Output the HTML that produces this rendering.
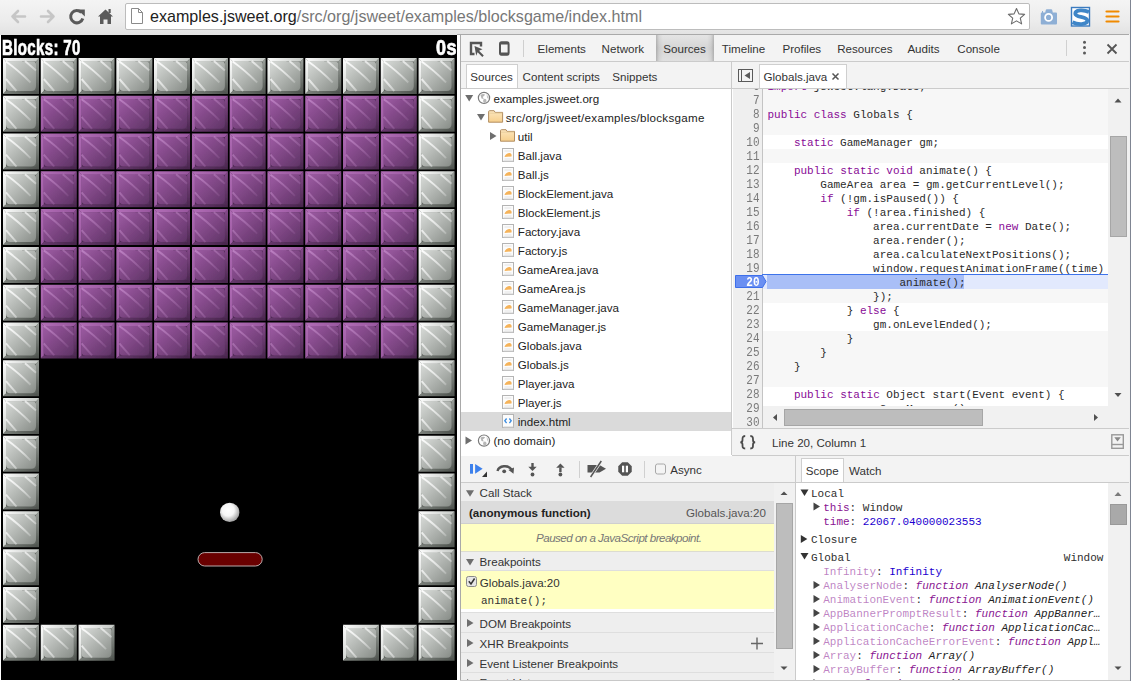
<!DOCTYPE html>
<html><head><meta charset="utf-8">
<style>
*{margin:0;padding:0;box-sizing:border-box}
html,body{width:1131px;height:681px;overflow:hidden;background:#e8e8e8;font-family:"Liberation Sans",sans-serif;position:relative}
.a{position:absolute}
.t{position:absolute;white-space:nowrap;line-height:1}
.mono{font-family:"Liberation Mono",monospace}
</style></head><body>
<div class="a" style="left:0px;top:0px;width:1131px;height:35px;background:linear-gradient(#f4f4f4,#ececec 60%,#e2e2e2);"></div>
<div class="a" style="left:125px;top:3px;width:905px;height:27px;background:#fff;border:1px solid #bcbcbc;border-radius:2px"></div>
<div class="t" style="left:150px;top:8.37px;font-size:16.1px;color:#222;">examples.jsweet.org<span style="color:#777">/src/org/jsweet/examples/blocksgame/index.html</span></div>
<svg class="a" style="left:0;top:0" width="125" height="34">
<g stroke="#c6c6c6" stroke-width="2.6" fill="none" stroke-linecap="round" stroke-linejoin="round">
<path d="M12.5,16.5 H25 M18,11 L12.5,16.5 L18,22"/>
<path d="M41,16.5 H53.5 M48,11 L53.5,16.5 L48,22"/>
</g>
<path d="M81.5,12.5 A6.2,6.2 0 1 0 82.8,18.5" stroke="#5a5a5a" stroke-width="3" fill="none"/>
<path d="M77.5,9.5 L84.8,9.5 L84.8,16.5 Z" fill="#5a5a5a"/>
<path d="M105.5,9.5 L113,16.5 L111,16.5 L111,24 L107.5,24 L107.5,19.5 L103.5,19.5 L103.5,24 L100,24 L100,16.5 L98,16.5 Z" fill="#5a5a5a"/>
<rect x="108.5" y="9" width="2.2" height="4" fill="#5a5a5a"/>
</svg>
<svg class="a" style="left:128px;top:6px" width="20" height="20">
<path d="M3.5,2.5 H10.5 L14.5,6.5 V17.5 H3.5 Z" fill="#fff" stroke="#8a8a8a" stroke-width="1"/>
<path d="M10.5,2.5 V6.5 H14.5" fill="none" stroke="#8a8a8a" stroke-width="1"/>
</svg>
<svg class="a" style="left:1000px;top:0" width="131" height="34">
<path d="M16.5,8.5 L18.9,13.9 L24.6,14.4 L20.3,18.2 L21.6,23.9 L16.5,20.9 L11.4,23.9 L12.7,18.2 L8.4,14.4 L14.1,13.9 Z" fill="none" stroke="#6a6a6a" stroke-width="1.1" stroke-linejoin="round"/>
<path d="M40.8,13.5 Q40.8,12.5 41.8,12.5 H45.2 L45.8,10 Q46,9.2 46.8,9.2 H51.2 Q52,9.2 52.2,10 L52.8,12.5 H56 Q57,12.5 57,13.5 V23.5 Q57,24.5 56,24.5 H41.8 Q40.8,24.5 40.8,23.5 Z" fill="#8eafd5"/>
<rect x="42" y="11" width="1" height="2" fill="#8eafd5"/>
<circle cx="48.6" cy="17.4" r="3.5" fill="none" stroke="#fff" stroke-width="1.8"/>
<rect x="71.5" y="7.5" width="18" height="18.5" fill="#fff" stroke="#3b7bbf" stroke-width="1.4"/>
<path d="M89,12 C84,9.5 75,9.5 75.3,13.8 C75.6,17.8 87.3,15.8 87.3,20.6 C87.3,25 77.5,24.8 72.5,22.2" fill="none" stroke="#3f86c8" stroke-width="3.8"/>
<g stroke="#f08a00" stroke-width="2.2" stroke-linecap="round"><path d="M106.5,11.5 H118.5 M106.5,16.5 H118.5 M106.5,21.5 H118.5"/></g>

</svg>
<div class="a" style="left:0px;top:35px;width:460px;height:646px;background:#fff;"></div>
<div class="a" style="left:1px;top:35px;width:456px;height:645px;background:#000;"></div>
<svg class="a" style="left:1px;top:35px" width="456" height="645" viewBox="0 0 456 645">
<defs>
<filter id="bl" x="-10%" y="-10%" width="120%" height="120%"><feGaussianBlur stdDeviation=".7"/></filter>
<linearGradient id="gi" x1="0" y1="0" x2="1" y2="1"><stop offset="0" stop-color="#d8dbd8"/><stop offset="0.5" stop-color="#b0b4b0"/><stop offset="1" stop-color="#878c87"/></linearGradient>
<linearGradient id="gt" x1="0" y1="0" x2="1" y2="0"><stop offset="0" stop-color="#ffffff"/><stop offset="1" stop-color="#c2c6c2"/></linearGradient>
<linearGradient id="gl" x1="0" y1="0" x2="0" y2="1"><stop offset="0" stop-color="#ffffff"/><stop offset="1" stop-color="#d0d4d0"/></linearGradient>
<linearGradient id="gb" x1="0" y1="0" x2="1" y2="0"><stop offset="0" stop-color="#7f847f"/><stop offset="1" stop-color="#4a4f4a"/></linearGradient>
<linearGradient id="gr" x1="0" y1="0" x2="0" y2="1"><stop offset="0" stop-color="#a0a5a0"/><stop offset="1" stop-color="#4a4f4a"/></linearGradient>
<linearGradient id="pi" x1="0" y1="0" x2="1" y2="1"><stop offset="0" stop-color="#9d5ba3"/><stop offset="0.5" stop-color="#7e4684"/><stop offset="1" stop-color="#5f3466"/></linearGradient>
<linearGradient id="pt" x1="0" y1="0" x2="1" y2="0"><stop offset="0" stop-color="#b36fb8"/><stop offset="1" stop-color="#96559c"/></linearGradient>
<linearGradient id="pl" x1="0" y1="0" x2="0" y2="1"><stop offset="0" stop-color="#b06cb5"/><stop offset="1" stop-color="#9a59a0"/></linearGradient>
<linearGradient id="pb" x1="0" y1="0" x2="1" y2="0"><stop offset="0" stop-color="#6a3a70"/><stop offset="1" stop-color="#452449"/></linearGradient>
<linearGradient id="pr" x1="0" y1="0" x2="0" y2="1"><stop offset="0" stop-color="#8a4c90"/><stop offset="1" stop-color="#452449"/></linearGradient>
<clipPath id="bc"><rect width="36" height="36"/></clipPath>
<filter id="b2" x="-5%" y="-5%" width="110%" height="110%"><feGaussianBlur stdDeviation=".6"/></filter>
<filter id="b3" x="-20%" y="-20%" width="140%" height="140%"><feGaussianBlur stdDeviation=".65"/></filter>
<symbol id="bg" viewBox="0 0 36 36" width="36" height="36">
<linearGradient id="bgS" gradientUnits="userSpaceOnUse" x1="2" y1="2" x2="30" y2="28"><stop offset="0" stop-color="#ffffff" stop-opacity=".95"/><stop offset=".6" stop-color="#ffffff" stop-opacity=".55"/><stop offset="1" stop-color="#ffffff" stop-opacity=".1"/></linearGradient>
<g clip-path="url(#bc)"><g filter="url(#b2)">
<rect x="-2" y="-2" width="40" height="40" fill="#5a5f5a"/>
<polygon points="-2,-2 38,-2 33,3.5 3,3.5" fill="url(#gt)"/>
<polygon points="-2,-2 3,3.5 3,33 -2,38" fill="url(#gl)"/>
<polygon points="38,-2 33,3.5 33,33 38,38" fill="url(#gr)"/>
<polygon points="-2,38 3,33 33,33 38,38" fill="url(#gb)"/>
<rect x="3" y="3.5" width="16" height="16" fill="#eef0ee"/>
<rect x="17" y="17" width="16" height="16" fill="#5f645f"/>
<path d="M3,3.5 H30 Q33,3.5 33,6.5 V28 Q33,33 28,33 H7 Q3,33 3,29 Z" fill="url(#gi)"/>
</g>
<path d="M3,3.5 Q15,12 27.5,24.5 M22,3 L33,12.5 M3,21 L13.5,33" stroke="url(#bgS)" stroke-width="1.9" fill="none" filter="url(#b3)"/>
</g></symbol>
<symbol id="bp" viewBox="0 0 36 36" width="36" height="36">
<linearGradient id="bpS" gradientUnits="userSpaceOnUse" x1="2" y1="2" x2="30" y2="28"><stop offset="0" stop-color="#d8a2de" stop-opacity=".55"/><stop offset=".6" stop-color="#d29ad8" stop-opacity=".3"/><stop offset="1" stop-color="#d29ad8" stop-opacity=".05"/></linearGradient>
<g clip-path="url(#bc)"><g filter="url(#b2)">
<rect x="-2" y="-2" width="40" height="40" fill="#4a2750"/>
<polygon points="-2,-2 38,-2 33,3.5 3,3.5" fill="url(#pt)"/>
<polygon points="-2,-2 3,3.5 3,33 -2,38" fill="url(#pl)"/>
<polygon points="38,-2 33,3.5 33,33 38,38" fill="url(#pr)"/>
<polygon points="-2,38 3,33 33,33 38,38" fill="url(#pb)"/>
<rect x="3" y="3.5" width="16" height="16" fill="#a562ab"/>
<rect x="17" y="17" width="16" height="16" fill="#55305b"/>
<path d="M3,3.5 H30 Q33,3.5 33,6.5 V28 Q33,33 28,33 H7 Q3,33 3,29 Z" fill="url(#pi)"/>
</g>
<path d="M3,3.5 Q15,12 27.5,24.5 M22,3 L33,12.5 M3,21 L13.5,33" stroke="url(#bpS)" stroke-width="1.9" fill="none" filter="url(#b3)"/>
</g></symbol>
<radialGradient id="ball" cx=".42" cy=".38" r=".62"><stop offset="0" stop-color="#fff"/><stop offset=".5" stop-color="#f6f6f6"/><stop offset="1" stop-color="#a0a0a0"/></radialGradient>
</defs>
<use href="#bg" x="2.0" y="23.0"/>
<use href="#bg" x="39.78" y="23.0"/>
<use href="#bg" x="77.56" y="23.0"/>
<use href="#bg" x="115.34" y="23.0"/>
<use href="#bg" x="153.12" y="23.0"/>
<use href="#bg" x="190.9" y="23.0"/>
<use href="#bg" x="228.68" y="23.0"/>
<use href="#bg" x="266.46" y="23.0"/>
<use href="#bg" x="304.24" y="23.0"/>
<use href="#bg" x="342.02" y="23.0"/>
<use href="#bg" x="379.8" y="23.0"/>
<use href="#bg" x="417.58" y="23.0"/>
<use href="#bg" x="2.0" y="60.78"/>
<use href="#bp" x="39.78" y="60.78"/>
<use href="#bp" x="77.56" y="60.78"/>
<use href="#bp" x="115.34" y="60.78"/>
<use href="#bp" x="153.12" y="60.78"/>
<use href="#bp" x="190.9" y="60.78"/>
<use href="#bp" x="228.68" y="60.78"/>
<use href="#bp" x="266.46" y="60.78"/>
<use href="#bp" x="304.24" y="60.78"/>
<use href="#bp" x="342.02" y="60.78"/>
<use href="#bp" x="379.8" y="60.78"/>
<use href="#bg" x="417.58" y="60.78"/>
<use href="#bg" x="2.0" y="98.56"/>
<use href="#bp" x="39.78" y="98.56"/>
<use href="#bp" x="77.56" y="98.56"/>
<use href="#bp" x="115.34" y="98.56"/>
<use href="#bp" x="153.12" y="98.56"/>
<use href="#bp" x="190.9" y="98.56"/>
<use href="#bp" x="228.68" y="98.56"/>
<use href="#bp" x="266.46" y="98.56"/>
<use href="#bp" x="304.24" y="98.56"/>
<use href="#bp" x="342.02" y="98.56"/>
<use href="#bp" x="379.8" y="98.56"/>
<use href="#bg" x="417.58" y="98.56"/>
<use href="#bg" x="2.0" y="136.34"/>
<use href="#bp" x="39.78" y="136.34"/>
<use href="#bp" x="77.56" y="136.34"/>
<use href="#bp" x="115.34" y="136.34"/>
<use href="#bp" x="153.12" y="136.34"/>
<use href="#bp" x="190.9" y="136.34"/>
<use href="#bp" x="228.68" y="136.34"/>
<use href="#bp" x="266.46" y="136.34"/>
<use href="#bp" x="304.24" y="136.34"/>
<use href="#bp" x="342.02" y="136.34"/>
<use href="#bp" x="379.8" y="136.34"/>
<use href="#bg" x="417.58" y="136.34"/>
<use href="#bg" x="2.0" y="174.12"/>
<use href="#bp" x="39.78" y="174.12"/>
<use href="#bp" x="77.56" y="174.12"/>
<use href="#bp" x="115.34" y="174.12"/>
<use href="#bp" x="153.12" y="174.12"/>
<use href="#bp" x="190.9" y="174.12"/>
<use href="#bp" x="228.68" y="174.12"/>
<use href="#bp" x="266.46" y="174.12"/>
<use href="#bp" x="304.24" y="174.12"/>
<use href="#bp" x="342.02" y="174.12"/>
<use href="#bp" x="379.8" y="174.12"/>
<use href="#bg" x="417.58" y="174.12"/>
<use href="#bg" x="2.0" y="211.9"/>
<use href="#bp" x="39.78" y="211.9"/>
<use href="#bp" x="77.56" y="211.9"/>
<use href="#bp" x="115.34" y="211.9"/>
<use href="#bp" x="153.12" y="211.9"/>
<use href="#bp" x="190.9" y="211.9"/>
<use href="#bp" x="228.68" y="211.9"/>
<use href="#bp" x="266.46" y="211.9"/>
<use href="#bp" x="304.24" y="211.9"/>
<use href="#bp" x="342.02" y="211.9"/>
<use href="#bp" x="379.8" y="211.9"/>
<use href="#bg" x="417.58" y="211.9"/>
<use href="#bg" x="2.0" y="249.68"/>
<use href="#bp" x="39.78" y="249.68"/>
<use href="#bp" x="77.56" y="249.68"/>
<use href="#bp" x="115.34" y="249.68"/>
<use href="#bp" x="153.12" y="249.68"/>
<use href="#bp" x="190.9" y="249.68"/>
<use href="#bp" x="228.68" y="249.68"/>
<use href="#bp" x="266.46" y="249.68"/>
<use href="#bp" x="304.24" y="249.68"/>
<use href="#bp" x="342.02" y="249.68"/>
<use href="#bp" x="379.8" y="249.68"/>
<use href="#bg" x="417.58" y="249.68"/>
<use href="#bg" x="2.0" y="287.46"/>
<use href="#bp" x="39.78" y="287.46"/>
<use href="#bp" x="77.56" y="287.46"/>
<use href="#bp" x="115.34" y="287.46"/>
<use href="#bp" x="153.12" y="287.46"/>
<use href="#bp" x="190.9" y="287.46"/>
<use href="#bp" x="228.68" y="287.46"/>
<use href="#bp" x="266.46" y="287.46"/>
<use href="#bp" x="304.24" y="287.46"/>
<use href="#bp" x="342.02" y="287.46"/>
<use href="#bp" x="379.8" y="287.46"/>
<use href="#bg" x="417.58" y="287.46"/>
<use href="#bg" x="2.0" y="325.24"/>
<use href="#bg" x="417.58" y="325.24"/>
<use href="#bg" x="2.0" y="363.02"/>
<use href="#bg" x="417.58" y="363.02"/>
<use href="#bg" x="2.0" y="400.8"/>
<use href="#bg" x="417.58" y="400.8"/>
<use href="#bg" x="2.0" y="438.58"/>
<use href="#bg" x="417.58" y="438.58"/>
<use href="#bg" x="2.0" y="476.36"/>
<use href="#bg" x="417.58" y="476.36"/>
<use href="#bg" x="2.0" y="514.14"/>
<use href="#bg" x="417.58" y="514.14"/>
<use href="#bg" x="2.0" y="551.92"/>
<use href="#bg" x="417.58" y="551.92"/>
<use href="#bg" x="2.0" y="589.7"/>
<use href="#bg" x="39.78" y="589.7"/>
<use href="#bg" x="77.56" y="589.7"/>
<use href="#bg" x="342.02" y="589.7"/>
<use href="#bg" x="379.8" y="589.7"/>
<use href="#bg" x="417.58" y="589.7"/>
<circle cx="228.7" cy="477.4" r="9.7" fill="url(#ball)"/>
<rect x="197" y="517.6" width="64.2" height="13.4" rx="6.7" fill="#690000" stroke="#b9aaaa" stroke-width="1"/>
</svg>
<div class="t" style="left:2px;top:37.5px;font-size:21.5px;font-weight:bold;color:#fff;transform:scaleX(.7);transform-origin:0 0;-webkit-text-stroke:.7px #fff;letter-spacing:.5px">Blocks: 70</div>
<div class="t" style="left:436px;top:37.5px;font-size:21.5px;font-weight:bold;color:#fff;transform:scaleX(.84);transform-origin:0 0;-webkit-text-stroke:.7px #fff;letter-spacing:.5px">0s</div>
<div class="a" style="left:460px;top:34px;width:671px;height:647px;background:#fff;"></div>
<div class="a" style="left:460px;top:34px;width:1px;height:647px;background:#a9a9a9;"></div>
<div class="a" style="left:457px;top:34px;width:673px;height:1px;background:#a9a9a9;"></div>
<div class="a" style="left:1129px;top:34px;width:1px;height:647px;background:#f0f0f0;"></div>
<div class="a" style="left:1130px;top:0px;width:1px;height:681px;background:#7f8592;"></div>
<div class="a" style="left:461px;top:35px;width:668px;height:26px;background:#f3f3f3;"></div>
<div class="a" style="left:461px;top:61px;width:668px;height:1px;background:#cbcbcb;"></div>
<div class="a" style="left:656px;top:35px;width:58px;height:26px;background:linear-gradient(90deg,rgba(0,0,0,.2),rgba(0,0,0,.05) 3px,rgba(0,0,0,0) 7px,rgba(0,0,0,0) 51px,rgba(0,0,0,.05) 55px,rgba(0,0,0,.2)),linear-gradient(#e4e4e4,#d6d6d6 50%,#e0e0e0);"></div>
<svg class="a" style="left:461px;top:35px" width="70" height="26">
<path d="M13.5,19 H10 V8 H20 V11.5" fill="none" stroke="#555" stroke-width="2.4"/>
<path d="M13.5,11 L21.5,14.3 L18,15.8 L22.8,20.6 L21.3,22 L16.6,17.2 L15.2,20.8 Z" fill="#555"/>
<rect x="39" y="7.3" width="8.6" height="12.4" rx="1.6" fill="none" stroke="#555" stroke-width="2"/>
<rect x="39" y="7" width="8.6" height="2.5" fill="#555"/><rect x="39" y="17.5" width="8.6" height="2.6" fill="#555"/>
<rect x="62" y="5" width="1" height="17" fill="#cfcfcf"/>
</svg>
<div class="t" style="left:537.6px;top:42.98px;font-size:11.6px;color:#333;">Elements</div>
<div class="t" style="left:601.6px;top:42.98px;font-size:11.6px;color:#333;">Network</div>
<div class="t" style="left:663.3px;top:42.98px;font-size:11.6px;color:#333;">Sources</div>
<div class="t" style="left:721.8px;top:42.98px;font-size:11.6px;color:#333;">Timeline</div>
<div class="t" style="left:782.5px;top:42.98px;font-size:11.6px;color:#333;">Profiles</div>
<div class="t" style="left:837.2px;top:42.98px;font-size:11.6px;color:#333;">Resources</div>
<div class="t" style="left:907.4px;top:42.98px;font-size:11.6px;color:#333;">Audits</div>
<div class="t" style="left:957.3px;top:42.98px;font-size:11.6px;color:#333;">Console</div>
<div class="a" style="left:1066px;top:40px;width:1px;height:16px;background:#d0d0d0;"></div>
<svg class="a" style="left:1075px;top:35px" width="50" height="26">
<circle cx="9.5" cy="7.2" r="1.5" fill="#5a5a5a"/><circle cx="9.5" cy="12.6" r="1.5" fill="#5a5a5a"/><circle cx="9.5" cy="18" r="1.5" fill="#5a5a5a"/>
<path d="M32.5,9.5 L41.5,18.5 M41.5,9.5 L32.5,18.5" stroke="#555" stroke-width="1.8"/>
</svg>
<div class="a" style="left:461px;top:62px;width:270px;height:26px;background:#f3f3f3;"></div>
<div class="a" style="left:461px;top:88px;width:270px;height:1px;background:#cbcbcb;"></div>
<div class="a" style="left:466px;top:64px;width:52px;height:24px;background:#fff;border:1px solid #cfcfcf;border-bottom:none"></div>
<div class="t" style="left:470.3px;top:70.98px;font-size:11.6px;color:#333;">Sources</div>
<div class="t" style="left:522.6px;top:70.98px;font-size:11.6px;color:#333;">Content scripts</div>
<div class="t" style="left:612.3px;top:70.98px;font-size:11.6px;color:#333;">Snippets</div>
<div class="a" style="left:731px;top:62px;width:1px;height:393px;background:#cbcbcb;"></div>
<div class="a" style="left:461px;top:89px;width:270px;height:366px;background:#fff;"></div>
<div class="a" style="left:461px;top:412px;width:270px;height:19px;background:#dadada;"></div>
<svg class="a" style="left:461px;top:89px" width="270" height="366"><defs><linearGradient id="fold" x1="0" y1="0" x2="0" y2="1"><stop offset="0" stop-color="#fde7bf"/><stop offset="1" stop-color="#f6cf8c"/></linearGradient></defs><path d="M4.199999999999989,6.099999999999994 H12.199999999999989 L8.199999999999989,12.599999999999994 Z" fill="#6e6e6e"/><circle cx="22.99999999999999" cy="8.899999999999997" r="5.6" fill="#fff" stroke="#7a7a7a" stroke-width="1.2"/><path d="M19.49999999999999,6.099999999999997 Q21.99999999999999,4.099999999999997 24.19999999999999,5.699999999999997 L21.79999999999999,7.899999999999997 L22.79999999999999,9.899999999999997 L20.49999999999999,9.399999999999997 Z" fill="#b4b4b4"/><ellipse cx="23.79999999999999" cy="11.899999999999997" rx="1.7" ry="2.1" fill="#b8b8b8"/><path d="M25.49999999999999,5.099999999999997 Q27.99999999999999,7.399999999999997 27.599999999999987,10.699999999999998 L25.99999999999999,8.399999999999997 Z" fill="#c8c8c8"/><path d="M16,25 H24 L20,31.5 Z" fill="#6e6e6e"/><path d="M27.600000000000023,33.2 V22.700000000000003 Q27.600000000000023,21.700000000000003 28.600000000000023,21.700000000000003 H33.10000000000002 L34.10000000000002,23.400000000000002 H41.60000000000002 V33.2 Z" fill="url(#fold)" stroke="#b28e62" stroke-width="1" stroke-linejoin="round"/><path d="M28.100000000000023,24.200000000000003 H41.10000000000002" stroke="#e9cf9f" stroke-width="1"/><path d="M29,43 V51 L35.5,47 Z" fill="#6e6e6e"/><path d="M39.5,52.19999999999999 V41.69999999999999 Q39.5,40.69999999999999 40.5,40.69999999999999 H45 L46,42.39999999999999 H53.5 V52.19999999999999 Z" fill="url(#fold)" stroke="#b28e62" stroke-width="1" stroke-linejoin="round"/><path d="M40,43.19999999999999 H53" stroke="#e9cf9f" stroke-width="1"/><rect x="41.5" y="59.5" width="11" height="13" fill="#fcfcfc" stroke="#b4b4b4" stroke-width="1"/><rect x="42.5" y="71.5" width="10" height="1" fill="#d0d0d0"/><path d="M43.5,68 C44,65.5 46,64.5 48,64 C50,63.5 51,65.5 50.5,67.5 Z" fill="#f5b35a"/><path d="M43.5,62 H50.5 M43.5,70 H50.5" stroke="#e4e4e4" stroke-width="1"/><rect x="41.5" y="78.5" width="11" height="13" fill="#fcfcfc" stroke="#b4b4b4" stroke-width="1"/><rect x="42.5" y="90.5" width="10" height="1" fill="#d0d0d0"/><path d="M43.5,87 C44,84.5 46,83.5 48,83 C50,82.5 51,84.5 50.5,86.5 Z" fill="#f5b35a"/><path d="M43.5,81 H50.5 M43.5,89 H50.5" stroke="#e4e4e4" stroke-width="1"/><rect x="41.5" y="97.5" width="11" height="13" fill="#fcfcfc" stroke="#b4b4b4" stroke-width="1"/><rect x="42.5" y="109.5" width="10" height="1" fill="#d0d0d0"/><path d="M43.5,106 C44,103.5 46,102.5 48,102 C50,101.5 51,103.5 50.5,105.5 Z" fill="#f5b35a"/><path d="M43.5,100 H50.5 M43.5,108 H50.5" stroke="#e4e4e4" stroke-width="1"/><rect x="41.5" y="116.5" width="11" height="13" fill="#fcfcfc" stroke="#b4b4b4" stroke-width="1"/><rect x="42.5" y="128.5" width="10" height="1" fill="#d0d0d0"/><path d="M43.5,125 C44,122.5 46,121.5 48,121 C50,120.5 51,122.5 50.5,124.5 Z" fill="#f5b35a"/><path d="M43.5,119 H50.5 M43.5,127 H50.5" stroke="#e4e4e4" stroke-width="1"/><rect x="41.5" y="135.5" width="11" height="13" fill="#fcfcfc" stroke="#b4b4b4" stroke-width="1"/><rect x="42.5" y="147.5" width="10" height="1" fill="#d0d0d0"/><path d="M43.5,144 C44,141.5 46,140.5 48,140 C50,139.5 51,141.5 50.5,143.5 Z" fill="#f5b35a"/><path d="M43.5,138 H50.5 M43.5,146 H50.5" stroke="#e4e4e4" stroke-width="1"/><rect x="41.5" y="154.5" width="11" height="13" fill="#fcfcfc" stroke="#b4b4b4" stroke-width="1"/><rect x="42.5" y="166.5" width="10" height="1" fill="#d0d0d0"/><path d="M43.5,163 C44,160.5 46,159.5 48,159 C50,158.5 51,160.5 50.5,162.5 Z" fill="#f5b35a"/><path d="M43.5,157 H50.5 M43.5,165 H50.5" stroke="#e4e4e4" stroke-width="1"/><rect x="41.5" y="173.5" width="11" height="13" fill="#fcfcfc" stroke="#b4b4b4" stroke-width="1"/><rect x="42.5" y="185.5" width="10" height="1" fill="#d0d0d0"/><path d="M43.5,182 C44,179.5 46,178.5 48,178 C50,177.5 51,179.5 50.5,181.5 Z" fill="#f5b35a"/><path d="M43.5,176 H50.5 M43.5,184 H50.5" stroke="#e4e4e4" stroke-width="1"/><rect x="41.5" y="192.5" width="11" height="13" fill="#fcfcfc" stroke="#b4b4b4" stroke-width="1"/><rect x="42.5" y="204.5" width="10" height="1" fill="#d0d0d0"/><path d="M43.5,201 C44,198.5 46,197.5 48,197 C50,196.5 51,198.5 50.5,200.5 Z" fill="#f5b35a"/><path d="M43.5,195 H50.5 M43.5,203 H50.5" stroke="#e4e4e4" stroke-width="1"/><rect x="41.5" y="211.5" width="11" height="13" fill="#fcfcfc" stroke="#b4b4b4" stroke-width="1"/><rect x="42.5" y="223.5" width="10" height="1" fill="#d0d0d0"/><path d="M43.5,220 C44,217.5 46,216.5 48,216 C50,215.5 51,217.5 50.5,219.5 Z" fill="#f5b35a"/><path d="M43.5,214 H50.5 M43.5,222 H50.5" stroke="#e4e4e4" stroke-width="1"/><rect x="41.5" y="230.5" width="11" height="13" fill="#fcfcfc" stroke="#b4b4b4" stroke-width="1"/><rect x="42.5" y="242.5" width="10" height="1" fill="#d0d0d0"/><path d="M43.5,239 C44,236.5 46,235.5 48,235 C50,234.5 51,236.5 50.5,238.5 Z" fill="#f5b35a"/><path d="M43.5,233 H50.5 M43.5,241 H50.5" stroke="#e4e4e4" stroke-width="1"/><rect x="41.5" y="249.5" width="11" height="13" fill="#fcfcfc" stroke="#b4b4b4" stroke-width="1"/><rect x="42.5" y="261.5" width="10" height="1" fill="#d0d0d0"/><path d="M43.5,258 C44,255.5 46,254.5 48,254 C50,253.5 51,255.5 50.5,257.5 Z" fill="#f5b35a"/><path d="M43.5,252 H50.5 M43.5,260 H50.5" stroke="#e4e4e4" stroke-width="1"/><rect x="41.5" y="268.5" width="11" height="13" fill="#fcfcfc" stroke="#b4b4b4" stroke-width="1"/><rect x="42.5" y="280.5" width="10" height="1" fill="#d0d0d0"/><path d="M43.5,277 C44,274.5 46,273.5 48,273 C50,272.5 51,274.5 50.5,276.5 Z" fill="#f5b35a"/><path d="M43.5,271 H50.5 M43.5,279 H50.5" stroke="#e4e4e4" stroke-width="1"/><rect x="41.5" y="287.5" width="11" height="13" fill="#fcfcfc" stroke="#b4b4b4" stroke-width="1"/><rect x="42.5" y="299.5" width="10" height="1" fill="#d0d0d0"/><path d="M43.5,296 C44,293.5 46,292.5 48,292 C50,291.5 51,293.5 50.5,295.5 Z" fill="#f5b35a"/><path d="M43.5,290 H50.5 M43.5,298 H50.5" stroke="#e4e4e4" stroke-width="1"/><rect x="41.5" y="306.5" width="11" height="13" fill="#fcfcfc" stroke="#b4b4b4" stroke-width="1"/><rect x="42.5" y="318.5" width="10" height="1" fill="#d0d0d0"/><path d="M43.5,315 C44,312.5 46,311.5 48,311 C50,310.5 51,312.5 50.5,314.5 Z" fill="#f5b35a"/><path d="M43.5,309 H50.5 M43.5,317 H50.5" stroke="#e4e4e4" stroke-width="1"/><rect x="41.5" y="325.5" width="11" height="13" fill="#fcfcfc" stroke="#b4b4b4" stroke-width="1"/><rect x="42.5" y="337.5" width="10" height="1" fill="#d0d0d0"/><path d="M45.6,329.5 L43.8,331.8 L45.6,334 M48.4,329.5 L50.2,331.8 L48.4,334" stroke="#3a8ce0" stroke-width="1.3" fill="none"/><path d="M4.5,347.5 V355.5 L11.0,351.5 Z" fill="#6e6e6e"/><circle cx="22.99999999999999" cy="351.6" r="5.6" fill="#fff" stroke="#7a7a7a" stroke-width="1.2"/><path d="M19.49999999999999,348.8 Q21.99999999999999,346.8 24.19999999999999,348.40000000000003 L21.79999999999999,350.6 L22.79999999999999,352.6 L20.49999999999999,352.1 Z" fill="#b4b4b4"/><ellipse cx="23.79999999999999" cy="354.6" rx="1.7" ry="2.1" fill="#b8b8b8"/><path d="M25.49999999999999,347.8 Q27.99999999999999,350.1 27.599999999999987,353.40000000000003 L25.99999999999999,351.1 Z" fill="#c8c8c8"/></svg>
<div class="t" style="left:493.5px;top:93.38px;font-size:11.6px;color:#222;">examples.jsweet.org</div>
<div class="t" style="left:505.7px;top:112.38px;font-size:11.6px;color:#222;letter-spacing:.28px">src/org/jsweet/examples/blocksgame</div>
<div class="t" style="left:517.8px;top:131.38px;font-size:11.6px;color:#222;">util</div>
<div class="t" style="left:517.8px;top:150.38px;font-size:11.6px;color:#222;">Ball.java</div>
<div class="t" style="left:517.8px;top:169.38px;font-size:11.6px;color:#222;">Ball.js</div>
<div class="t" style="left:517.8px;top:188.38px;font-size:11.6px;color:#222;">BlockElement.java</div>
<div class="t" style="left:517.8px;top:207.38px;font-size:11.6px;color:#222;">BlockElement.js</div>
<div class="t" style="left:517.8px;top:226.38px;font-size:11.6px;color:#222;">Factory.java</div>
<div class="t" style="left:517.8px;top:245.38px;font-size:11.6px;color:#222;">Factory.js</div>
<div class="t" style="left:517.8px;top:264.38px;font-size:11.6px;color:#222;">GameArea.java</div>
<div class="t" style="left:517.8px;top:283.38px;font-size:11.6px;color:#222;">GameArea.js</div>
<div class="t" style="left:517.8px;top:302.38px;font-size:11.6px;color:#222;">GameManager.java</div>
<div class="t" style="left:517.8px;top:321.38px;font-size:11.6px;color:#222;">GameManager.js</div>
<div class="t" style="left:517.8px;top:340.38px;font-size:11.6px;color:#222;">Globals.java</div>
<div class="t" style="left:517.8px;top:359.38px;font-size:11.6px;color:#222;">Globals.js</div>
<div class="t" style="left:517.8px;top:378.38px;font-size:11.6px;color:#222;">Player.java</div>
<div class="t" style="left:517.8px;top:397.38px;font-size:11.6px;color:#222;">Player.js</div>
<div class="t" style="left:517.8px;top:416.38px;font-size:11.6px;color:#222;">index.html</div>
<div class="t" style="left:493.5px;top:435.38px;font-size:11.6px;color:#222;">(no domain)</div>
<div class="a" style="left:732px;top:62px;width:397px;height:26px;background:#f3f3f3;"></div>
<div class="a" style="left:732px;top:88px;width:397px;height:1px;background:#cbcbcb;"></div>
<svg class="a" style="left:736px;top:66px" width="20" height="20">
<rect x="2.5" y="3.5" width="14" height="12" fill="none" stroke="#5a5a5a" stroke-width="1"/>
<rect x="5" y="3.5" width="1" height="12" fill="#5a5a5a"/>
<path d="M14,6 V13 L8.5,9.5 Z" fill="#5a5a5a"/>
</svg>
<div class="a" style="left:759px;top:64px;width:88px;height:24px;background:#fff;border:1px solid #cfcfcf;border-bottom:none"></div>
<div class="t" style="left:763.5px;top:70.98px;font-size:11.6px;color:#333;">Globals.java</div>
<svg class="a" style="left:830px;top:71px" width="12" height="12"><path d="M2.5,2.5 L8.5,8.5 M8.5,2.5 L2.5,8.5" stroke="#555" stroke-width="1.5"/></svg>
<div class="a" style="left:733px;top:89px;width:30px;height:339px;background:#efefef;"></div>
<div class="a" style="left:762px;top:89px;width:1px;height:339px;background:#c4c4c4;"></div>
<div class="a" style="left:763px;top:89px;width:345px;height:317px;background:#fff;"></div>
<div class="a" style="left:763px;top:89px;width:345px;height:46px;background:#f7f7f7;"></div>
<div class="a" style="left:763px;top:149px;width:345px;height:14px;background:#f7f7f7;"></div>
<div class="a" style="left:763px;top:289px;width:345px;height:14px;background:#f7f7f7;"></div>
<div class="a" style="left:763px;top:331px;width:345px;height:56px;background:#f7f7f7;"></div>
<div class="a" style="left:763px;top:275px;width:345px;height:14px;background:#e2e9fd;"></div>
<div class="a" style="left:767px;top:275px;width:197px;height:14px;background:#a9bff7;"></div>
<div class="a" style="left:762px;top:274px;width:346px;height:1px;background:#3d73ea;"></div>
<div class="a mono" style="left:767.5px;top:89px;width:340px;height:317px;overflow:hidden;font-size:11px;color:#2a2a2a"><div style="position:absolute;left:0;top:-9.5px;height:14px;line-height:14px;white-space:pre"><span style="color:rgb(136,10,150)">import</span> jsweet.lang.Date;</div><div style="position:absolute;left:0;top:4.5px;height:14px;line-height:14px;white-space:pre"></div><div style="position:absolute;left:0;top:18.5px;height:14px;line-height:14px;white-space:pre"><span style="color:rgb(136,10,150)">public</span> <span style="color:rgb(136,10,150)">class</span> Globals {</div><div style="position:absolute;left:0;top:32.5px;height:14px;line-height:14px;white-space:pre"></div><div style="position:absolute;left:0;top:46.5px;height:14px;line-height:14px;white-space:pre">    <span style="color:rgb(136,10,150)">static</span> GameManager gm;</div><div style="position:absolute;left:0;top:60.5px;height:14px;line-height:14px;white-space:pre"></div><div style="position:absolute;left:0;top:74.5px;height:14px;line-height:14px;white-space:pre">    <span style="color:rgb(136,10,150)">public</span> <span style="color:rgb(136,10,150)">static</span> <span style="color:rgb(136,10,150)">void</span> animate() {</div><div style="position:absolute;left:0;top:88.5px;height:14px;line-height:14px;white-space:pre">        GameArea area = gm.getCurrentLevel();</div><div style="position:absolute;left:0;top:102.5px;height:14px;line-height:14px;white-space:pre">        <span style="color:rgb(136,10,150)">if</span> (!gm.isPaused()) {</div><div style="position:absolute;left:0;top:116.5px;height:14px;line-height:14px;white-space:pre">            <span style="color:rgb(136,10,150)">if</span> (!area.finished) {</div><div style="position:absolute;left:0;top:130.5px;height:14px;line-height:14px;white-space:pre">                area.currentDate = <span style="color:rgb(136,10,150)">new</span> Date();</div><div style="position:absolute;left:0;top:144.5px;height:14px;line-height:14px;white-space:pre">                area.render();</div><div style="position:absolute;left:0;top:158.5px;height:14px;line-height:14px;white-space:pre">                area.calculateNextPositions();</div><div style="position:absolute;left:0;top:172.5px;height:14px;line-height:14px;white-space:pre">                window.requestAnimationFrame((time) -&gt; {</div><div style="position:absolute;left:0;top:186.5px;height:14px;line-height:14px;white-space:pre">                    animate();</div><div style="position:absolute;left:0;top:200.5px;height:14px;line-height:14px;white-space:pre">                });</div><div style="position:absolute;left:0;top:214.5px;height:14px;line-height:14px;white-space:pre">            } <span style="color:rgb(136,10,150)">else</span> {</div><div style="position:absolute;left:0;top:228.5px;height:14px;line-height:14px;white-space:pre">                gm.onLevelEnded();</div><div style="position:absolute;left:0;top:242.5px;height:14px;line-height:14px;white-space:pre">            }</div><div style="position:absolute;left:0;top:256.5px;height:14px;line-height:14px;white-space:pre">        }</div><div style="position:absolute;left:0;top:270.5px;height:14px;line-height:14px;white-space:pre">    }</div><div style="position:absolute;left:0;top:284.5px;height:14px;line-height:14px;white-space:pre"></div><div style="position:absolute;left:0;top:298.5px;height:14px;line-height:14px;white-space:pre">    <span style="color:rgb(136,10,150)">public</span> <span style="color:rgb(136,10,150)">static</span> Object start(Event event) {</div><div style="position:absolute;left:0;top:312.5px;height:14px;line-height:14px;white-space:pre">        gm = <span style="color:rgb(136,10,150)">new</span> GameManager();</div><div style="position:absolute;left:0;top:326.5px;height:14px;line-height:14px;white-space:pre"></div></div>
<svg class="a" style="left:733px;top:89px" width="36" height="339"><path d="M2.5,186.5 H29.5 L33,192.5 L29.5,198.5 H2.5 Z" fill="#6a8ff2" stroke="#3d6fea" stroke-width="1"/></svg>
<div class="a mono" style="left:733px;top:89px;width:26.5px;height:339px;overflow:hidden;font-size:11px"><div style="position:absolute;right:0;top:-9.5px;height:14px;line-height:14px;color:#7a7a7a;transform:scaleY(1.1);transform-origin:0 10px">6</div><div style="position:absolute;right:0;top:4.5px;height:14px;line-height:14px;color:#7a7a7a;transform:scaleY(1.1);transform-origin:0 10px">7</div><div style="position:absolute;right:0;top:18.5px;height:14px;line-height:14px;color:#7a7a7a;transform:scaleY(1.1);transform-origin:0 10px">8</div><div style="position:absolute;right:0;top:32.5px;height:14px;line-height:14px;color:#7a7a7a;transform:scaleY(1.1);transform-origin:0 10px">9</div><div style="position:absolute;right:0;top:46.5px;height:14px;line-height:14px;color:#7a7a7a;transform:scaleY(1.1);transform-origin:0 10px">10</div><div style="position:absolute;right:0;top:60.5px;height:14px;line-height:14px;color:#7a7a7a;transform:scaleY(1.1);transform-origin:0 10px">11</div><div style="position:absolute;right:0;top:74.5px;height:14px;line-height:14px;color:#7a7a7a;transform:scaleY(1.1);transform-origin:0 10px">12</div><div style="position:absolute;right:0;top:88.5px;height:14px;line-height:14px;color:#7a7a7a;transform:scaleY(1.1);transform-origin:0 10px">13</div><div style="position:absolute;right:0;top:102.5px;height:14px;line-height:14px;color:#7a7a7a;transform:scaleY(1.1);transform-origin:0 10px">14</div><div style="position:absolute;right:0;top:116.5px;height:14px;line-height:14px;color:#7a7a7a;transform:scaleY(1.1);transform-origin:0 10px">15</div><div style="position:absolute;right:0;top:130.5px;height:14px;line-height:14px;color:#7a7a7a;transform:scaleY(1.1);transform-origin:0 10px">16</div><div style="position:absolute;right:0;top:144.5px;height:14px;line-height:14px;color:#7a7a7a;transform:scaleY(1.1);transform-origin:0 10px">17</div><div style="position:absolute;right:0;top:158.5px;height:14px;line-height:14px;color:#7a7a7a;transform:scaleY(1.1);transform-origin:0 10px">18</div><div style="position:absolute;right:0;top:172.5px;height:14px;line-height:14px;color:#7a7a7a;transform:scaleY(1.1);transform-origin:0 10px">19</div><div style="position:absolute;right:0;top:186.5px;height:14px;line-height:14px;color:#fff;font-weight:bold;transform:scaleY(1.1);transform-origin:0 10px">20</div><div style="position:absolute;right:0;top:200.5px;height:14px;line-height:14px;color:#7a7a7a;transform:scaleY(1.1);transform-origin:0 10px">21</div><div style="position:absolute;right:0;top:214.5px;height:14px;line-height:14px;color:#7a7a7a;transform:scaleY(1.1);transform-origin:0 10px">22</div><div style="position:absolute;right:0;top:228.5px;height:14px;line-height:14px;color:#7a7a7a;transform:scaleY(1.1);transform-origin:0 10px">23</div><div style="position:absolute;right:0;top:242.5px;height:14px;line-height:14px;color:#7a7a7a;transform:scaleY(1.1);transform-origin:0 10px">24</div><div style="position:absolute;right:0;top:256.5px;height:14px;line-height:14px;color:#7a7a7a;transform:scaleY(1.1);transform-origin:0 10px">25</div><div style="position:absolute;right:0;top:270.5px;height:14px;line-height:14px;color:#7a7a7a;transform:scaleY(1.1);transform-origin:0 10px">26</div><div style="position:absolute;right:0;top:284.5px;height:14px;line-height:14px;color:#7a7a7a;transform:scaleY(1.1);transform-origin:0 10px">27</div><div style="position:absolute;right:0;top:298.5px;height:14px;line-height:14px;color:#7a7a7a;transform:scaleY(1.1);transform-origin:0 10px">28</div><div style="position:absolute;right:0;top:312.5px;height:14px;line-height:14px;color:#7a7a7a;transform:scaleY(1.1);transform-origin:0 10px">29</div><div style="position:absolute;right:0;top:326.5px;height:14px;line-height:14px;color:#7a7a7a;transform:scaleY(1.1);transform-origin:0 10px">30</div></div>
<div class="a" style="left:1108px;top:89px;width:21px;height:317px;background:#f1f1f1;"></div>
<div class="a" style="left:1110px;top:136px;width:17px;height:101px;background:#bdbdbd;border:1px solid #a6a6a6"></div>
<svg class="a" style="left:1108px;top:89px" width="21" height="317"><path d="M6.5,13.5 L10,9.5 L13.5,13.5 Z" fill="#505050"/><path d="M6.5,304 L10,308 L13.5,304 Z" fill="#505050"/></svg>
<div class="a" style="left:763px;top:406px;width:366px;height:22px;background:#f1f1f1;"></div>
<div class="a" style="left:784px;top:409px;width:199px;height:17px;background:#bdbdbd;border:1px solid #a6a6a6"></div>
<svg class="a" style="left:763px;top:406px" width="345" height="22"><path d="M14,8 L10,11.5 L14,15 Z" fill="#505050"/><path d="M331,8 L335,11.5 L331,15 Z" fill="#505050"/></svg>
<div class="a" style="left:732px;top:428px;width:397px;height:1px;background:#cbcbcb;"></div>
<div class="a" style="left:732px;top:429px;width:397px;height:26px;background:#f3f3f3;"></div>
<div class="a" style="left:732px;top:455px;width:397px;height:1px;background:#cbcbcb;"></div>
<svg class="a" style="left:736px;top:433px" width="24" height="18"><path d="M9.2,3 C6.3,3 6.5,4.8 6.5,7 C6.5,8.6 6,9.3 4.3,9.3 C6,9.3 6.5,10 6.5,11.6 C6.5,13.8 6.3,15.5 9.2,15.5 M14.3,3 C17.2,3 17,4.8 17,7 C17,8.6 17.5,9.3 19.2,9.3 C17.5,9.3 17,10 17,11.6 C17,13.8 17.2,15.5 14.3,15.5" fill="none" stroke="#4a4a4a" stroke-width="1.8"/></svg>
<div class="t" style="left:772px;top:437.18px;font-size:11.6px;color:#333;">Line 20, Column 1</div>
<svg class="a" style="left:1108px;top:432px" width="20" height="20"><rect x="3.8" y="2.8" width="11.5" height="13.5" fill="none" stroke="#999" stroke-width="1.4"/><path d="M3.8,12.5 H15.3" stroke="#999" stroke-width="1.4"/><path d="M6.3,5.2 H12.8 L9.55,9.4 Z" fill="#888"/></svg>
<div class="a" style="left:461px;top:456px;width:334px;height:26px;background:#f3f3f3;"></div>
<div class="a" style="left:461px;top:482px;width:334px;height:1px;background:#cbcbcb;"></div>
<div class="a" style="left:795px;top:455px;width:1px;height:226px;background:#cbcbcb;"></div>
<svg class="a" style="left:461px;top:456px" width="334" height="26">
<rect x="9" y="8" width="3" height="9.7" fill="#3c80ec"/>
<path d="M14.1,8 L21.6,12.85 L14.1,17.7 Z" fill="#3c80ec"/>
<path d="M26,15.5 L21,21 L26,21 Z" fill="#333"/>
<path d="M36.5,15 C38,9.5 47,8.5 50.5,13.5" fill="none" stroke="#555" stroke-width="2.4"/>
<path d="M47.5,14 L53,11.5 L52.5,17.8 Z" fill="#555"/>
<circle cx="43.2" cy="15.3" r="1.9" fill="#555"/>
<path d="M71.5,7 V11.5" stroke="#555" stroke-width="2.4"/><path d="M67.3,10.8 H75.7 L71.5,15 Z" fill="#555"/><circle cx="71.5" cy="18.5" r="1.9" fill="#555"/>
<path d="M99.4,11.5 V16" stroke="#555" stroke-width="2.4"/><path d="M95.2,11.8 H103.6 L99.4,7.5 Z" fill="#555"/><circle cx="99.4" cy="18.5" r="1.9" fill="#555"/>
<rect x="118" y="5" width="1" height="17" fill="#d0d0d0"/>
<path d="M126.5,9 H138.5 L145,12.8 L138.5,16.5 H126.5 Z" fill="#555"/>
<path d="M140.3,5 L129.6,21" stroke="#f3f3f3" stroke-width="3"/>
<path d="M140.3,5 L129.6,21" stroke="#555" stroke-width="1.5"/>
<polygon points="170.74,15.79 166.79,19.74 161.21,19.74 157.26,15.79 157.26,10.21 161.21,6.26 166.79,6.26 170.74,10.21" fill="#555"/>
<rect x="161" y="9.7" width="2.2" height="6.6" fill="#fff"/><rect x="164.8" y="9.7" width="2.2" height="6.6" fill="#fff"/>
<rect x="183" y="5" width="1" height="17" fill="#d0d0d0"/>
<rect x="194.5" y="8" width="10" height="10" rx="2" fill="#f4f4f4" stroke="#a8a8a8"/>
</svg>
<div class="t" style="left:670.2px;top:463.88px;font-size:11.6px;color:#333;">Async</div>
<div class="a" style="left:461px;top:483px;width:313px;height:18px;background:#eeeeee;"></div>
<div class="a" style="left:461px;top:501px;width:313px;height:22px;background:#dcdcdc;"></div>
<div class="a" style="left:461px;top:523px;width:313px;height:1px;background:#cfcfcf;"></div>
<div class="a" style="left:461px;top:524px;width:313px;height:27px;background:#ffffc2;"></div>
<div class="a" style="left:461px;top:551px;width:313px;height:1px;background:#dcdcd0;"></div>
<div class="a" style="left:461px;top:552px;width:313px;height:18px;background:#eeeeee;"></div>
<div class="a" style="left:461px;top:570px;width:313px;height:1px;background:#dedede;"></div>
<div class="a" style="left:461px;top:571px;width:313px;height:38px;background:#ffffc2;"></div>
<div class="a" style="left:461px;top:609px;width:313px;height:3px;background:#ffffff;"></div>
<div class="a" style="left:461px;top:612px;width:313px;height:1px;background:#dedede;"></div>
<div class="a" style="left:461px;top:613px;width:313px;height:19px;background:#eeeeee;"></div>
<div class="a" style="left:461px;top:632px;width:313px;height:1px;background:#dedede;"></div>
<div class="a" style="left:461px;top:633px;width:313px;height:19px;background:#eeeeee;"></div>
<div class="a" style="left:461px;top:652px;width:313px;height:1px;background:#dedede;"></div>
<div class="a" style="left:461px;top:653px;width:313px;height:19px;background:#eeeeee;"></div>
<div class="a" style="left:461px;top:672px;width:313px;height:1px;background:#dedede;"></div>
<div class="a" style="left:461px;top:673px;width:313px;height:8px;background:#eeeeee;"></div>
<svg class="a" style="left:461px;top:483px" width="313" height="198"><path d="M5,7.199999999999989 H13 L9,13.699999999999989 Z" fill="#6e6e6e"/><path d="M5,76 H13 L9,82.5 Z" fill="#6e6e6e"/><path d="M6,136 V144 L12.5,140 Z" fill="#6e6e6e"/><path d="M6,156 V164 L12.5,160 Z" fill="#6e6e6e"/><path d="M6,176 V184 L12.5,180 Z" fill="#6e6e6e"/><path d="M6,196 V204 L12.5,200 Z" fill="#6e6e6e"/><path d="M290,160.5 H302 M296,154.5 V166.5" stroke="#666" stroke-width="1.4"/><rect x="5.5" y="93.5" width="10" height="10" rx="2" fill="#e6e6e6" stroke="#8a8a8a"/><path d="M7.8,98.2 L10,101 L13.6,95.5" fill="none" stroke="#333" stroke-width="1.5"/></svg>
<div class="t" style="left:479.6px;top:486.98px;font-size:11.6px;color:#333;">Call Stack</div>
<div class="t" style="left:469px;top:506.68px;font-size:11.6px;color:#222;font-weight:bold">(anonymous function)</div>
<div class="t" style="left:686px;top:506.68px;font-size:11.6px;color:#555;">Globals.java:20</div>
<div class="t" style="left:536px;top:531.98px;font-size:11.6px;color:#777;font-style:italic;letter-spacing:-.52px">Paused on a JavaScript breakpoint.</div>
<div class="t" style="left:479.6px;top:555.98px;font-size:11.6px;color:#333;">Breakpoints</div>
<div class="t" style="left:479.8px;top:576.78px;font-size:11.6px;color:#333;">Globals.java:20</div>
<div class="t mono" style="left:481px;top:595.87px;font-size:11px;color:#333;">animate();</div>
<div class="t" style="left:479.6px;top:617.98px;font-size:11.6px;color:#333;">DOM Breakpoints</div>
<div class="t" style="left:479.6px;top:637.78px;font-size:11.6px;color:#333;">XHR Breakpoints</div>
<div class="t" style="left:479.6px;top:657.78px;font-size:11.6px;color:#333;">Event Listener Breakpoints</div>
<div class="t" style="left:479.6px;top:677.18px;font-size:11.6px;color:#333;">Event Listeners</div>
<div class="a" style="left:774px;top:483px;width:21px;height:198px;background:#f1f1f1;"></div>
<div class="a" style="left:776px;top:503px;width:17px;height:146px;background:#bdbdbd;border:1px solid #a6a6a6"></div>
<svg class="a" style="left:774px;top:483px" width="21" height="198"><path d="M6.5,12 L10,8.5 L13.5,12 Z" fill="#505050"/><path d="M6.5,183.5 L10,187 L13.5,183.5 Z" fill="#505050"/></svg>
<div class="a" style="left:796px;top:456px;width:333px;height:26px;background:#f3f3f3;"></div>
<div class="a" style="left:796px;top:482px;width:333px;height:1px;background:#cbcbcb;"></div>
<div class="a" style="left:801px;top:458px;width:43px;height:24px;background:#fff;border:1px solid #cfcfcf;border-bottom:none"></div>
<div class="t" style="left:805.8px;top:464.98px;font-size:11.6px;color:#333;">Scope</div>
<div class="t" style="left:849px;top:464.98px;font-size:11.6px;color:#333;">Watch</div>
<div class="a" style="left:796px;top:483px;width:312px;height:198px;background:#fff;"></div>
<div class="t mono" style="left:811px;top:488.97px;font-size:11px;color:#2e2e2e;">Local</div>
<div class="t mono" style="left:823.2px;top:502.77px;font-size:11px;color:#2e2e2e;"><span style="color:rgb(136,19,145)">this</span>: Window</div>
<div class="t mono" style="left:823.2px;top:516.77px;font-size:11px;color:#2e2e2e;"><span style="color:rgb(136,19,145)">time</span>: <span style="color:rgb(28,0,207)">22067.040000023553</span></div>
<div class="t mono" style="left:811px;top:534.57px;font-size:11px;color:#2e2e2e;">Closure</div>
<div class="t mono" style="left:811px;top:552.97px;font-size:11px;color:#2e2e2e;">Global</div>
<div class="t mono" style="left:823.2px;top:567.07px;font-size:11px;color:#2e2e2e;"><span style="color:rgba(136,19,145,.55)">Infinity</span>: <span style="color:rgb(28,0,207)">Infinity</span></div>
<div class="t mono" style="left:823.2px;top:581.07px;font-size:11px;color:#2e2e2e;"><span style="color:rgba(136,19,145,.55)">AnalyserNode</span>: <span style="color:rgb(136,19,145);font-style:italic">function</span><span style="color:#222;font-style:italic"> AnalyserNode()</span></div>
<div class="t mono" style="left:823.2px;top:595.07px;font-size:11px;color:#2e2e2e;"><span style="color:rgba(136,19,145,.55)">AnimationEvent</span>: <span style="color:rgb(136,19,145);font-style:italic">function</span><span style="color:#222;font-style:italic"> AnimationEvent()</span></div>
<div class="t mono" style="left:823.2px;top:609.07px;font-size:11px;color:#2e2e2e;"><span style="color:rgba(136,19,145,.55)">AppBannerPromptResult</span>: <span style="color:rgb(136,19,145);font-style:italic">function</span><span style="color:#222;font-style:italic"> AppBanner…</span></div>
<div class="t mono" style="left:823.2px;top:623.07px;font-size:11px;color:#2e2e2e;"><span style="color:rgba(136,19,145,.55)">ApplicationCache</span>: <span style="color:rgb(136,19,145);font-style:italic">function</span><span style="color:#222;font-style:italic"> ApplicationCac…</span></div>
<div class="t mono" style="left:823.2px;top:637.07px;font-size:11px;color:#2e2e2e;"><span style="color:rgba(136,19,145,.55)">ApplicationCacheErrorEvent</span>: <span style="color:rgb(136,19,145);font-style:italic">function</span><span style="color:#222;font-style:italic"> Appl…</span></div>
<div class="t mono" style="left:823.2px;top:651.07px;font-size:11px;color:#2e2e2e;"><span style="color:rgba(136,19,145,.55)">Array</span>: <span style="color:rgb(136,19,145);font-style:italic">function</span><span style="color:#222;font-style:italic"> Array()</span></div>
<div class="t mono" style="left:823.2px;top:665.07px;font-size:11px;color:#2e2e2e;"><span style="color:rgba(136,19,145,.55)">ArrayBuffer</span>: <span style="color:rgb(136,19,145);font-style:italic">function</span><span style="color:#222;font-style:italic"> ArrayBuffer()</span></div>
<div class="t mono" style="left:823.2px;top:679.07px;font-size:11px;color:#2e2e2e;"><span style="color:rgba(136,19,145,.55)">Attr</span>: <span style="color:rgb(136,19,145);font-style:italic">function</span><span style="color:#222;font-style:italic"> Attr()</span></div>
<div class="t mono" style="left:1063.8px;top:552.97px;font-size:11px;color:#2e2e2e;">Window</div>
<svg class="a" style="left:796px;top:483px" width="312" height="198"><path d="M4.5,6.5 H12.5 L8.5,13.0 Z" fill="#333"/><path d="M17.5,19.5 V27.5 L24.0,23.5 Z" fill="#444"/><path d="M4.8,52 V60 L11.3,56 Z" fill="#333"/><path d="M4.5,70 H12.5 L8.5,76.5 Z" fill="#333"/><path d="M17.5,98 V106 L24.0,102 Z" fill="#444"/><path d="M17.5,112 V120 L24.0,116 Z" fill="#444"/><path d="M17.5,126 V134 L24.0,130 Z" fill="#444"/><path d="M17.5,140 V148 L24.0,144 Z" fill="#444"/><path d="M17.5,154 V162 L24.0,158 Z" fill="#444"/><path d="M17.5,168 V176 L24.0,172 Z" fill="#444"/><path d="M17.5,182 V190 L24.0,186 Z" fill="#444"/><path d="M17.5,196 V204 L24.0,200 Z" fill="#444"/></svg>
<div class="a" style="left:1108px;top:483px;width:21px;height:198px;background:#f1f1f1;"></div>
<div class="a" style="left:1110px;top:504px;width:17px;height:21px;background:#a9a9a9;border:1px solid #999"></div>
<svg class="a" style="left:1108px;top:483px" width="21" height="198"><path d="M6.5,13 L10,9 L13.5,13 Z" fill="#7a7a7a"/><path d="M6.5,183.5 L10,187 L13.5,183.5 Z" fill="#505050"/></svg>
<div class="a" style="left:460px;top:680px;width:670px;height:1px;background:#c8c8c8;"></div>
</body></html>
